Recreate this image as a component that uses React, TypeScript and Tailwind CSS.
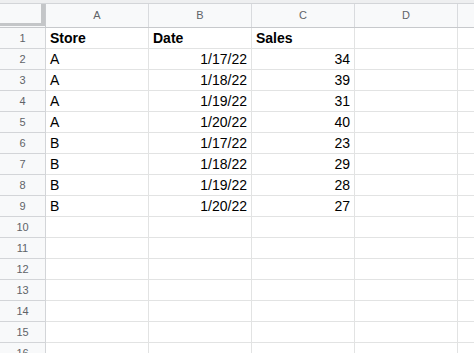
const cols = ["A", "B", "C", "D", ""];

const data: [string, string, string][] = [
  ["Store", "Date", "Sales"],
  ["A", "1/17/22", "34"],
  ["A", "1/18/22", "39"],
  ["A", "1/19/22", "31"],
  ["A", "1/20/22", "40"],
  ["B", "1/17/22", "23"],
  ["B", "1/18/22", "29"],
  ["B", "1/19/22", "28"],
  ["B", "1/20/22", "27"],
];

export default function App() {
  const rows = Array.from({ length: 16 }, (_, i) => i + 1);

  return (
    <div className="w-[474px] h-[353px] overflow-hidden bg-white font-['Liberation_Sans',Arial,sans-serif]">
      {/* top strip */}
      <div className="h-[4px] bg-[#eeeff0] border-b border-[#d3d5d8]" />

      {/* column headers */}
      <div className="flex h-[24px] bg-[#f8f9fa] border-b border-[#c7c9cc]">
        <div className="w-[46px] shrink-0 border-r border-[#c7c9cc] flex">
          <div className="w-[42px] h-[19px] border-r-[4px] border-b-[3px] border-[#c4c6c8] box-content" />
        </div>
        {cols.map((c, i) => (
          <div
            key={i}
            className="w-[103px] shrink-0 border-r border-[#d9dbde] flex items-center justify-center text-[11px] text-[#5f6368]"
          >
            {c}
          </div>
        ))}
      </div>

      {/* rows */}
      {rows.map((r) => {
        const row = data[r - 1];
        const bold = r === 1;
        return (
          <div key={r} className="flex h-[21px]">
            <div className="w-[46px] shrink-0 bg-[#f8f9fa] border-r border-b border-[#d3d5d8] flex items-center justify-center text-[11px] text-[#5f6368]">
              {r}
            </div>
            {[0, 1, 2, 3, 4].map((ci) => {
              const v = row && ci < 3 ? row[ci] : "";
              const right = !bold && (ci === 1 || ci === 2);
              return (
                <div
                  key={ci}
                  className={`w-[103px] shrink-0 border-r border-b border-[#e2e3e3] flex items-end pb-[2px] px-[4px] text-[14px] leading-[16px] text-black ${
                    right ? "justify-end" : "justify-start"
                  } ${bold ? "font-bold" : ""}`}
                >
                  {v}
                </div>
              );
            })}
          </div>
        );
      })}
    </div>
  );
}
